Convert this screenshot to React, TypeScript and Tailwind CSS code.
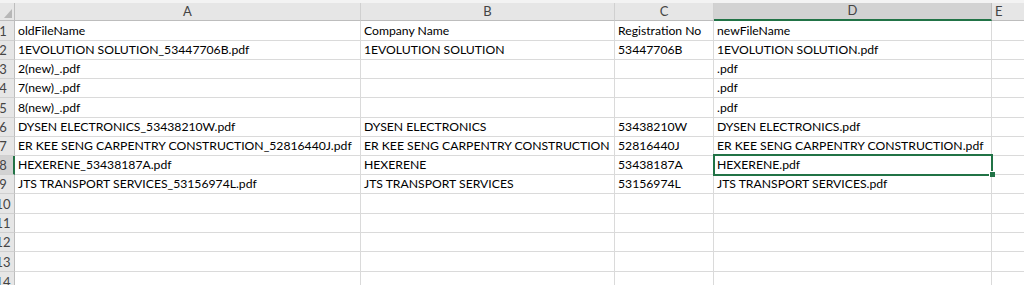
import React from 'react';

type Row = { n: number; h: string; cells: [string, string, string, string] };

// column widths include the 1px right gridline
const COLS = [
  { key: 'A', w: 'w-[346px]' },
  { key: 'B', w: 'w-[254px]' },
  { key: 'C', w: 'w-[99px]' },
  { key: 'D', w: 'w-[278px]' },
];

const ROWS: Row[] = [
  { n: 1, h: 'h-[20px]', cells: ['oldFileName', 'Company Name', 'Registration No', 'newFileName'] },
  { n: 2, h: 'h-[19px]', cells: ['1EVOLUTION SOLUTION_53447706B.pdf', '1EVOLUTION SOLUTION', '53447706B', '1EVOLUTION SOLUTION.pdf'] },
  { n: 3, h: 'h-[19px]', cells: ['2(new)_.pdf', '', '', '.pdf'] },
  { n: 4, h: 'h-[19px]', cells: ['7(new)_.pdf', '', '', '.pdf'] },
  { n: 5, h: 'h-[20px]', cells: ['8(new)_.pdf', '', '', '.pdf'] },
  { n: 6, h: 'h-[19px]', cells: ['DYSEN ELECTRONICS_53438210W.pdf', 'DYSEN ELECTRONICS', '53438210W', 'DYSEN ELECTRONICS.pdf'] },
  { n: 7, h: 'h-[19px]', cells: ['ER KEE SENG CARPENTRY CONSTRUCTION_52816440J.pdf', 'ER KEE SENG CARPENTRY CONSTRUCTION', '52816440J', 'ER KEE SENG CARPENTRY CONSTRUCTION.pdf'] },
  { n: 8, h: 'h-[19px]', cells: ['HEXERENE_53438187A.pdf', 'HEXERENE', '53438187A', 'HEXERENE.pdf'] },
  { n: 9, h: 'h-[19px]', cells: ['JTS TRANSPORT SERVICES_53156974L.pdf', 'JTS TRANSPORT SERVICES', '53156974L', 'JTS TRANSPORT SERVICES.pdf'] },
  { n: 10, h: 'h-[20px]', cells: ['', '', '', ''] },
  { n: 11, h: 'h-[19px]', cells: ['', '', '', ''] },
  { n: 12, h: 'h-[19px]', cells: ['', '', '', ''] },
  { n: 13, h: 'h-[20px]', cells: ['', '', '', ''] },
  { n: 14, h: 'h-[20px]', cells: ['', '', '', ''] },
];

const SELECTED_ROW = 8;

export default function App() {
  return (
    <div
      className="relative w-[1024px] h-[285px] overflow-hidden bg-white text-black text-[12.2px]"
      style={{ fontFamily: 'Lato, "Liberation Sans", sans-serif' }}
    >
      {/* strip above the column headers */}
      <div className="h-[3px] bg-[#f3f3f3]" />

      {/* column headers */}
      <div className="flex h-[18px] bg-[#e6e6e6] text-[#444] text-[13px]">
        <div className="w-[15px] shrink-0 border-r border-b border-[#bdbdbd] flex items-end justify-end">
          <svg width="14" height="17" viewBox="0 0 14 17">
            <polygon points="4,15 12,15 12,6" fill="#b7b7b7" />
          </svg>
        </div>
        {COLS.map((c) => (
          <div
            key={c.key}
            className={`${c.w} shrink-0 flex items-center justify-center border-r ${
              c.key === 'D'
                ? 'bg-[#d2d2d2] border-r-[#bdbdbd] border-b-2 border-b-[#217346]'
                : 'border-[#d0d0d0] border-b border-b-[#bdbdbd]'
            }`}
          >
            {c.key}
          </div>
        ))}
        <div className="flex-1 border-b border-[#bdbdbd] pl-[3px] flex items-center">E</div>
      </div>

      {/* rows */}
      {ROWS.map((r) => (
        <div key={r.n} className={`flex ${r.h}`}>
          <div
            className={`w-[15px] shrink-0 overflow-hidden flex items-end pb-[1px] border-b border-[#d0d0d0] text-[#444] text-[13px] ${
              r.n === SELECTED_ROW
                ? 'bg-[#d2d2d2] border-r-2 border-r-[#217346]'
                : 'bg-[#e6e6e6] border-r border-r-[#bdbdbd]'
            }`}
          >
            <span className="w-[24px] -ml-[9px] shrink-0 text-center leading-[16px]">{r.n}</span>
          </div>
          {COLS.map((c, i) => (
            <div
              key={c.key}
              className={`${c.w} shrink-0 flex items-end pb-[1px] pl-[3px] border-r border-b border-[#dadada] whitespace-nowrap ${
                c.key === 'D' ? 'overflow-visible' : 'overflow-hidden'
              }`}
            >
              <span className="leading-[16px]">{r.cells[i]}</span>
            </div>
          ))}
          <div className="flex-1 border-b border-[#dadada]" />
        </div>
      ))}

      {/* active cell D8 */}
      <div className="absolute left-[713px] top-[154px] w-[280px] h-[22px] border-2 border-[#217346] pointer-events-none" />
      <div className="absolute left-[989px] top-[171px] w-[6px] h-[6px] bg-[#217346] border-l border-t border-white" />
    </div>
  );
}
